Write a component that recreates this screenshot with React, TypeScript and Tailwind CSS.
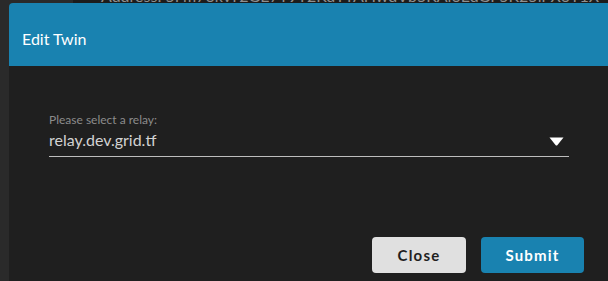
export default function App() {
  return (
    <div className="relative h-[281px] w-[608px] overflow-hidden bg-[#262626] font-['Lato','Liberation_Sans',sans-serif]">
      {/* page behind the scrim */}
      <div className="flex h-full">
        <div className="w-[73px] bg-[#2a2a2a]" />
        <div className="flex-1 bg-[#1c1c1c] pl-[28px]">
          <div className="-mt-[12px] whitespace-nowrap text-[16px] leading-[16px] text-[#8f8f8f]">
            Address: 5Fm76kvT2GE7T9T2KdTTAHwdVb5KAi6EdGF5K25iFX6T1X
          </div>
        </div>
      </div>

      {/* dialog */}
      <div className="absolute left-[9px] top-[3px] flex h-[290px] w-[620px] flex-col overflow-hidden rounded-tl-[4px] bg-[#1f1f1f]">
        <div className="flex h-[63px] items-center bg-[#1982b0] pl-[13px] pt-[9px] text-[16px] text-white">
          Edit Twin
        </div>
        <div className="px-[40px] pt-[47px]">
          <div className="w-[520px] border-b border-[#bdbdbd] pb-[5px]">
            <div className="text-[12px] leading-[14px] text-[#8c8c8c]">Please select a relay:</div>
            <div className="mt-[2px] flex items-center justify-between">
              <span className="text-[16px] leading-[22px] text-[#d2d2d2]">relay.dev.grid.tf</span>
              <svg width="15" height="9" viewBox="0 0 15 9" className="mr-[5px] mt-[3px]">
                <path d="M0.5 0.5 H14.5 L8.5 8 Q7.5 9 6.5 8 Z" fill="#ffffff" />
              </svg>
            </div>
          </div>
        </div>
        <div className="flex gap-[15px] pl-[363px] pt-[80px]">
          <button className="h-[36px] w-[94px] rounded-[4px] bg-[#e0e0e0] text-[15px] font-bold tracking-[0.08em] text-[#1f1f1f]">
            Close
          </button>
          <button className="h-[36px] w-[103px] rounded-[4px] bg-[#1982b0] text-[15px] font-bold tracking-[0.08em] text-white">
            Submit
          </button>
        </div>
      </div>
    </div>
  );
}
